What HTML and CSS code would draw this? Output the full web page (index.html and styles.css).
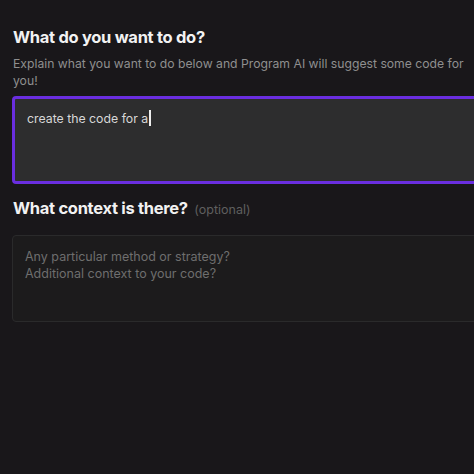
FILE: index.html
```html
<!DOCTYPE html>
<html>
<head>
<meta charset="utf-8">
<link rel="stylesheet" href="styles.css">
</head>
<body>
<main class="page">
  <section class="block">
    <h2 class="title">What do you want to do?</h2>
    <p class="desc">Explain what you want to do below and Program AI will suggest some code for you!</p>
    <div class="input active"><span class="typed">create the code for a</span><span class="caret"></span></div>
  </section>
  <section class="block second">
    <h2 class="title">What context is there? <span class="opt">(optional)</span></h2>
    <div class="input context"><span class="ph">Any particular method or strategy?<br>Additional context to your code?</span></div>
  </section>
</main>
</body>
</html>
```
FILE: styles.css
```css
html, body { margin: 0; padding: 0; background: #19171a; }
body { width: 474px; height: 474px; overflow: hidden; font-family: Inter, "Noto Sans", sans-serif; }
.page { padding: 27px 0 0 13px; display: flex; flex-direction: column; }
.block { display: flex; flex-direction: column; }
.title { margin: 0; font-size: 16.5px; font-weight: 700; color: #f2f2f2; letter-spacing: -0.3px; line-height: 20px; }
.desc { margin: 8px 0 0; font-size: 12.2px; line-height: 17px; color: #8f8f8f; letter-spacing: 0; width: 458px; }
.input { width: 480px; box-sizing: border-box; margin-left: -1px; border-radius: 4px; }
.active { margin-top: 7px; height: 88px; border: 3.5px solid #6a2ee0; background: #2d2d2e; padding: 11px 12px; display: flex; align-items: flex-start; }
.typed { font-size: 12.3px; color: #d8d8d8; letter-spacing: 0; line-height: 17px; }
.caret { display: inline-block; width: 1.5px; height: 16px; background: #eee; margin-left: 1px; }
.second { margin-top: 14px; }
.opt { font-size: 12.5px; font-weight: 400; color: #5f5f5f; letter-spacing: 0; margin-left: 3px; }
.context { margin-top: 15px; height: 87px; border: 1px solid #2a2a2b; background: #1c1b1c; padding: 13px 12px; }
.ph { font-size: 12.5px; line-height: 16.5px; color: #6e6e6e; letter-spacing: 0; display: block; }
```
